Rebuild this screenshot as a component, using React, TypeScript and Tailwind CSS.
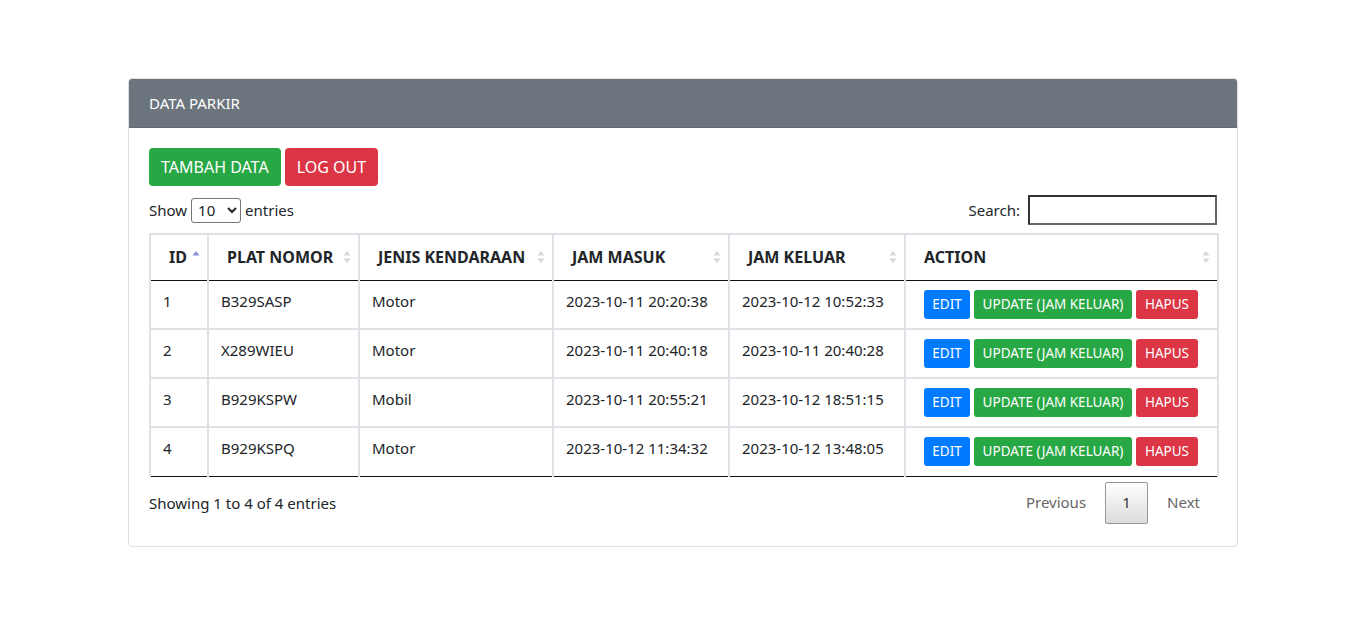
import React from "react";

type Row = { id: number; plat: string; jenis: string; masuk: string; keluar: string };

const rows: Row[] = [
  { id: 1, plat: "B329SASP", jenis: "Motor", masuk: "2023-10-11 20:20:38", keluar: "2023-10-12 10:52:33" },
  { id: 2, plat: "X289WIEU", jenis: "Motor", masuk: "2023-10-11 20:40:18", keluar: "2023-10-11 20:40:28" },
  { id: 3, plat: "B929KSPW", jenis: "Mobil", masuk: "2023-10-11 20:55:21", keluar: "2023-10-12 18:51:15" },
  { id: 4, plat: "B929KSPQ", jenis: "Motor", masuk: "2023-10-12 11:34:32", keluar: "2023-10-12 13:48:05" },
];

function SortIcon({ active }: { active?: boolean }) {
  return (
    <svg width="8" height="14" viewBox="0 0 8 14" className="absolute right-[7px] top-1/2 -translate-y-1/2">
      <path d="M4 1 L7.5 5.5 L0.5 5.5 Z" fill={active ? "#8a8fd8" : "#d8d8d8"} />
      {!active && <path d="M4 13 L7.5 8.5 L0.5 8.5 Z" fill="#d8d8d8" />}
    </svg>
  );
}

const headers = [
  { label: "ID", w: "w-[58px]", active: true },
  { label: "PLAT NOMOR", w: "w-[151px]" },
  { label: "JENIS KENDARAAN", w: "w-[194px]" },
  { label: "JAM MASUK", w: "w-[176px]" },
  { label: "JAM KELUAR", w: "w-[176px]" },
  { label: "ACTION", w: "" },
];

export default function App() {
  const cell = (last: boolean) =>
    `align-top pt-[9px] px-3 border-2 border-[#dee2e6] border-t-0 ${last ? "border-b border-b-[#111]" : ""}`;

  return (
    <div className="min-h-screen bg-white pt-[78px] text-[#212529] font-['Noto_Sans','Open_Sans',sans-serif]">
      <div className="mx-auto w-[1110px] rounded-[4px] border border-[#dfdfdf]">
        <div className="h-[49px] flex items-center px-5 bg-[#6c757d] text-white text-[15px] rounded-t-[3px] border-b border-[#636a71]">
          DATA PARKIR
        </div>
        <div className="px-5 pt-5 pb-[22px]">
          <div className="flex gap-1">
            <button className="h-[38px] px-3 rounded-[4px] bg-[#28a745] text-white text-[16px]">TAMBAH DATA</button>
            <button className="h-[38px] px-3 rounded-[4px] bg-[#dc3545] text-white text-[16px]">LOG OUT</button>
          </div>
          <div className="flex items-center justify-between mt-[9px] text-[15px]">
            <div className="flex items-center gap-1">
              <span>Show</span>
              <select className="h-[25px] w-[50px] border border-[#767676] rounded-[3px] text-[15px] px-[2px]">
                <option>10</option>
              </select>
              <span>entries</span>
            </div>
            <div className="flex items-center gap-2">
              <span>Search:</span>
              <input className="w-[189px] h-[30px] border-2 border-[#333] border-b-[#666] border-r-[#666]" />
            </div>
          </div>
          <table className="mt-[8px] w-[1070px] table-fixed border-collapse text-[15px]">
            <thead>
              <tr className="h-[46px]">
                {headers.map((h) => (
                  <th
                    key={h.label}
                    className={`${h.w} relative text-left font-bold text-[16px] pl-[18px] pr-4 border-2 border-[#dee2e6] border-b border-b-[#111] whitespace-nowrap`}
                  >
                    {h.label}
                    <SortIcon active={h.active} />
                  </th>
                ))}
              </tr>
            </thead>
            <tbody>
              {rows.map((r, i) => {
                const last = i === rows.length - 1;
                return (
                  <tr key={r.id} className="h-[49px]">
                    <td className={cell(last)}>{r.id}</td>
                    <td className={cell(last)}>{r.plat}</td>
                    <td className={cell(last)}>{r.jenis}</td>
                    <td className={cell(last)}>{r.masuk}</td>
                    <td className={cell(last)}>{r.keluar}</td>
                    <td className={`align-top pt-[9px] pl-[18px] border-2 border-[#dee2e6] border-t-0 ${last ? "border-b border-b-[#111]" : ""}`}>
                      <div className="flex gap-1 text-[13.5px] text-white">
                        <button className="h-[29px] w-[46px] rounded-[3px] bg-[#007bff]">EDIT</button>
                        <button className="h-[29px] w-[158px] rounded-[3px] bg-[#28a745]">UPDATE (JAM KELUAR)</button>
                        <button className="h-[29px] w-[62px] rounded-[3px] bg-[#dc3545]">HAPUS</button>
                      </div>
                    </td>
                  </tr>
                );
              })}
            </tbody>
          </table>
          <div className="flex items-start justify-between mt-[5px] text-[15px]">
            <div className="pt-[10px]">Showing 1 to 4 of 4 entries</div>
            <div className="flex items-center pr-[17px]">
              <span className="px-[19px] text-[#666]">Previous</span>
              <span className="w-[43px] h-[42px] flex items-center justify-center rounded-[2px] border border-[#979797] bg-gradient-to-b from-white to-[#dcdcdc] text-[#333]">
                1
              </span>
              <span className="pl-[19px] text-[#666]">Next</span>
            </div>
          </div>
        </div>
      </div>
    </div>
  );
}
